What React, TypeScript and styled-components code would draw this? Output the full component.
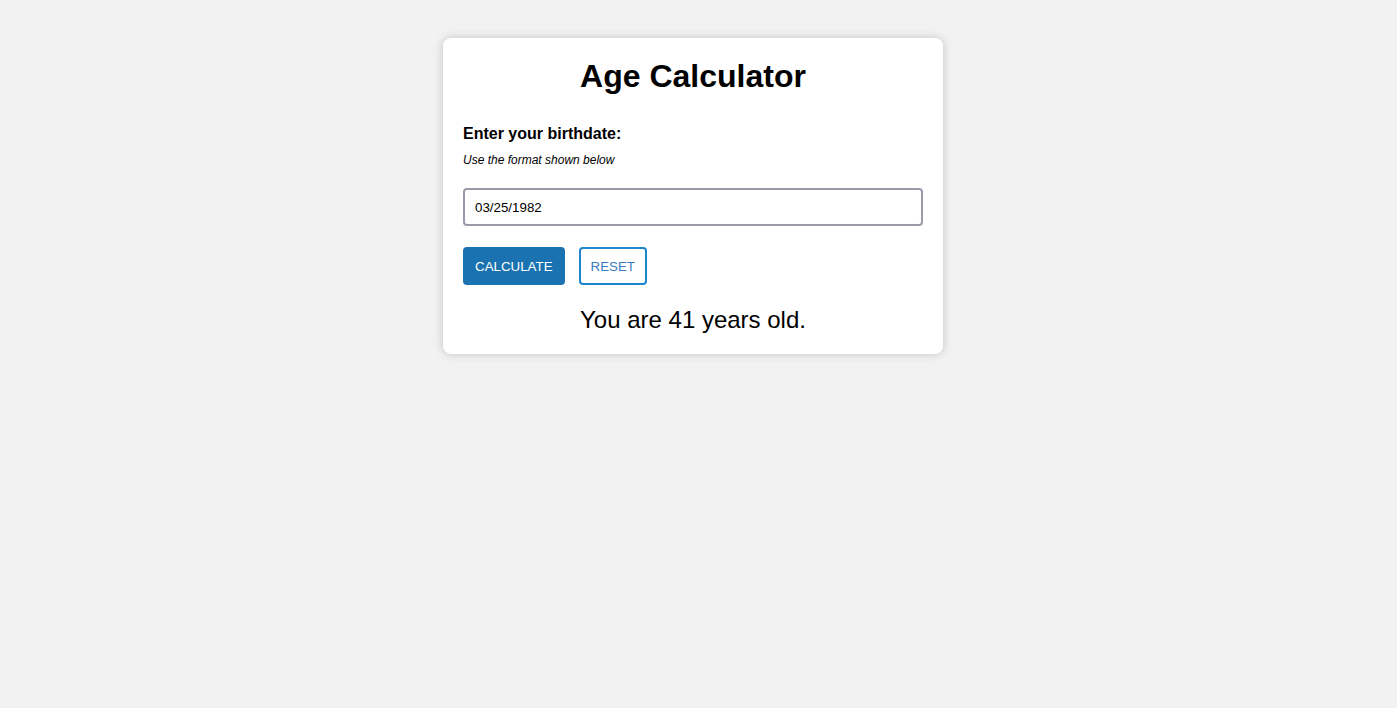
import React, { useState } from "react";
import styled, { createGlobalStyle } from "styled-components";

const Global = createGlobalStyle`
  html, body { margin: 0; padding: 0; background: #f2f2f2; }
  body { font-family: "Liberation Sans", Arial, sans-serif; color: #000; }
  * { box-sizing: border-box; }
`;

const Page = styled.div`
  display: flex;
  justify-content: center;
  align-items: flex-start;
  padding: 38px 11px 0 0;
  min-height: 708px;
`;

const Card = styled.div`
  width: 500px;
  background: #fff;
  border-radius: 8px;
  box-shadow: 0 0 10px rgba(0, 0, 0, 0.2);
  padding: 20px;
  display: flex;
  flex-direction: column;
`;

const Title = styled.h1`
  margin: 0 0 30px;
  font-size: 32px;
  font-weight: bold;
  text-align: center;
`;

const Label = styled.label`
  font-size: 16px;
  font-weight: bold;
  margin-bottom: 10px;
`;

const Hint = styled.p`
  margin: 0 0 21px;
  font-size: 12px;
  font-style: italic;
`;

const Input = styled.input`
  width: 100%;
  height: 38px;
  border: 2px solid #9a9aab;
  border-radius: 4px;
  padding: 0 10px;
  font-family: "Liberation Sans", Arial, sans-serif;
  font-size: 13.333px;
  color: #000;
  outline: none;
  margin-bottom: 21px;
`;

const Buttons = styled.div`
  display: flex;
  gap: 14px;
  margin-bottom: 21px;
`;

const Button = styled.button<{ $variant: "primary" | "outline" }>`
  height: 38px;
  padding: 0 10px;
  border-radius: 4px;
  font-family: "Liberation Sans", Arial, sans-serif;
  font-size: 13.333px;
  cursor: pointer;
  text-transform: uppercase;
  border: 2px solid ${(p) => (p.$variant === "primary" ? "#1a73b0" : "#1e84cc")};
  background: ${(p) => (p.$variant === "primary" ? "#1a73b0" : "#fff")};
  color: ${(p) => (p.$variant === "primary" ? "#fff" : "#3a7cc0")};
`;

const Result = styled.p`
  margin: 0;
  font-size: 24px;
  text-align: center;
`;

export default function App() {
  const [value, setValue] = useState("03/25/1982");
  return (
    <>
      <Global />
      <Page>
        <Card>
          <Title>Age Calculator</Title>
          <Label htmlFor="bd">Enter your birthdate:</Label>
          <Hint>Use the format shown below</Hint>
          <Input id="bd" value={value} onChange={(e) => setValue(e.target.value)} />
          <Buttons>
            <Button $variant="primary">Calculate</Button>
            <Button $variant="outline">Reset</Button>
          </Buttons>
          <Result>You are 41 years old.</Result>
        </Card>
      </Page>
    </>
  );
}
